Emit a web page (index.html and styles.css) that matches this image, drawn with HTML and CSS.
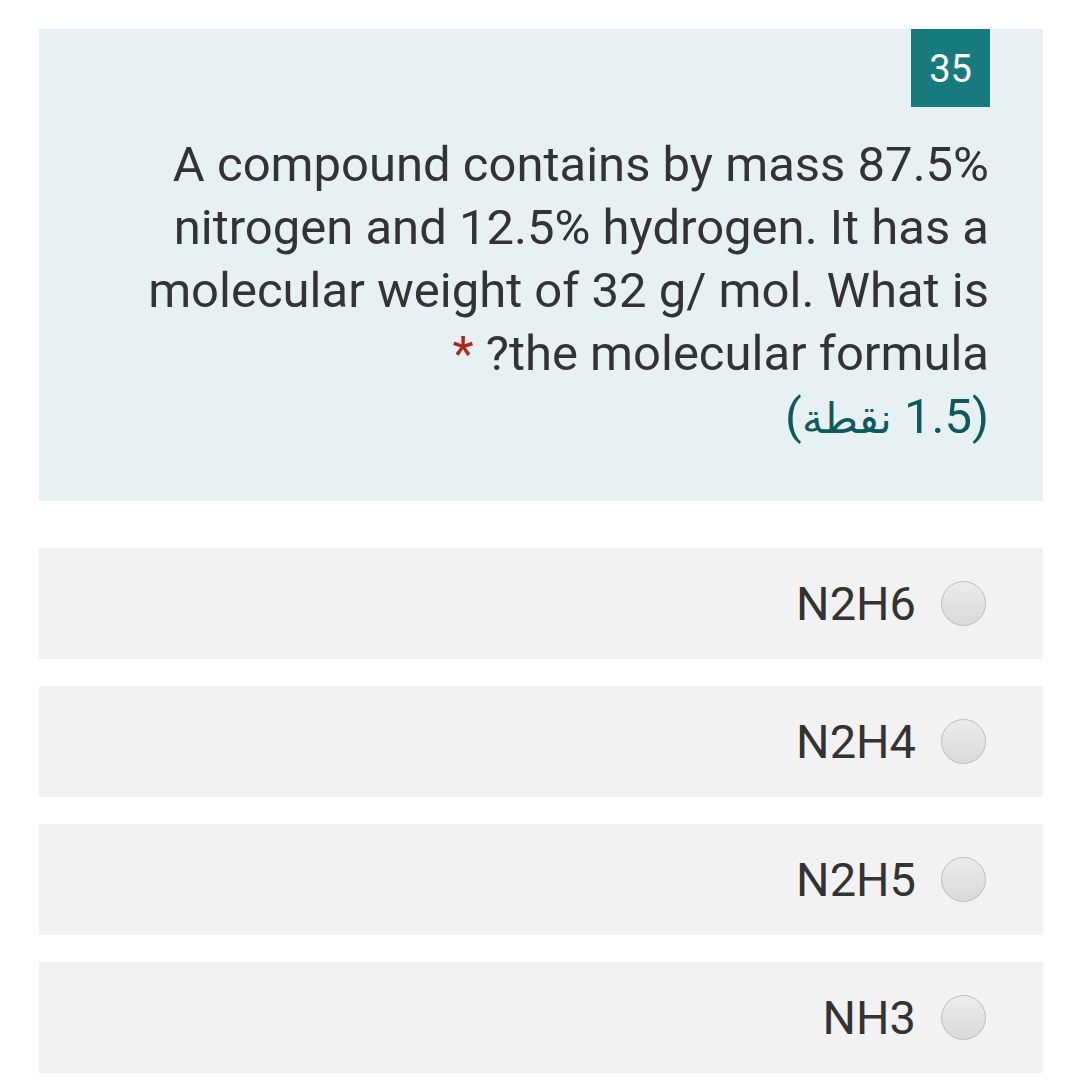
FILE: index.html
```html
<!DOCTYPE html>
<html lang="ar" dir="rtl">
<head>
<meta charset="utf-8">
<link rel="stylesheet" href="styles.css">
</head>
<body>
<main class="form">
  <section class="question">
    <div class="head"><span class="badge">35</span></div>
    <div class="qtext">A compound contains by mass 87.5% nitrogen and 12.5% hydrogen. It has a molecular weight of 32 g/ mol. What is the molecular formula? <span class="req">*</span></div>
    <div class="points">(1.5 <span class="ar">نقطة</span>)</div>
  </section>
  <div class="options">
    <label class="option"><span class="radio"></span><span class="otext">N2H6</span></label>
    <label class="option"><span class="radio"></span><span class="otext">N2H4</span></label>
    <label class="option"><span class="radio"></span><span class="otext">N2H5</span></label>
    <label class="option"><span class="radio"></span><span class="otext">NH3</span></label>
  </div>
</main>
</body>
</html>
```
FILE: styles.css
```css
html, body {
  margin: 0;
  padding: 0;
  background: #ffffff;
}
body {
  font-family: Roboto, "DejaVu Sans", sans-serif;
  color: #333333;
}
.form {
  width: 1004px;
  margin: 29px 37px 0 0;
}
.question {
  background: #e7f0f3;
  padding: 0 54px 51px 54px;
}
.head {
  display: flex;
  justify-content: flex-start;
}
.badge {
  display: flex;
  align-items: center;
  justify-content: center;
  width: 79px;
  height: 78px;
  background: #177b7e;
  color: #ffffff;
  font-size: 38px;
  padding-top: 2px;
  box-sizing: border-box;
  margin-right: -1px;
}
.qtext {
  margin-top: 26px;
  font-size: 49px;
  line-height: 63px;
  text-align: right;
  color: #333333;
}
.req {
  color: #b3261e;
  margin-left: 4px;
}
.points {
  font-size: 49px;
  line-height: 63px;
  color: #0e5a5a;
}
.ar {
  font-size: 42px;
}
.options {
  display: flex;
  flex-direction: column;
  gap: 27px;
  margin-top: 47px;
}
.option {
  display: flex;
  align-items: center;
  gap: 25px;
  height: 111px;
  background: #f2f2f2;
  padding: 0 57px;
}
.radio {
  width: 43px;
  height: 43px;
  border-radius: 50%;
  border: 1.5px solid #bdbdbd;
  background: linear-gradient(#ececec, #dadada);
  flex: none;
}
.otext {
  font-size: 47px;
  color: #333333;
}
```
